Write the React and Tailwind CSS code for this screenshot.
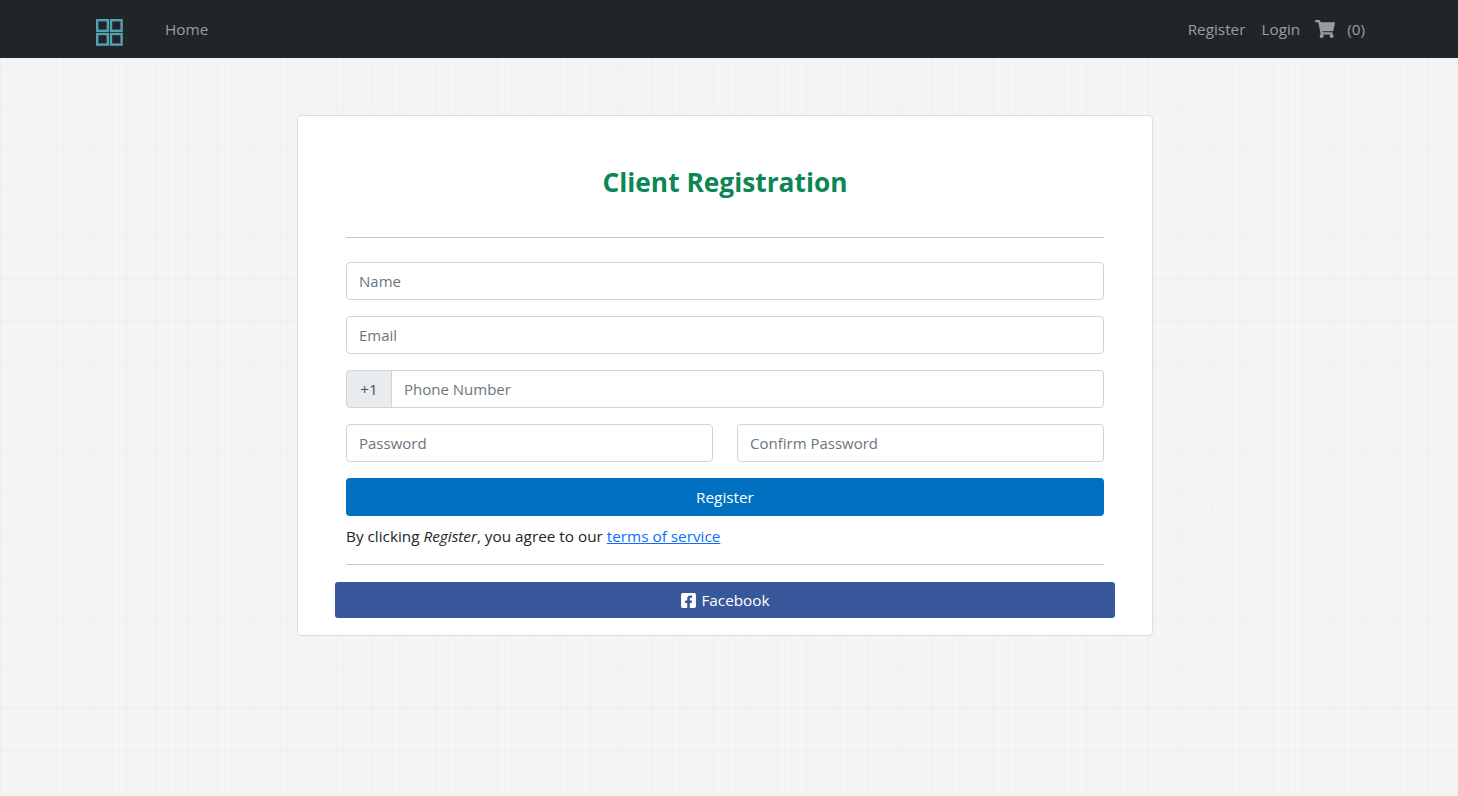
import React from "react";
import { FaShoppingCart, FaFacebookSquare } from "react-icons/fa";

const inputClass =
  "block h-[38px] w-full rounded border border-[#ced4da] bg-white px-3 text-[15px] text-[#495057] outline-none placeholder:text-[#6c757d]";

const Logo = () => (
  <svg width="27" height="27" viewBox="0 0 27 27" fill="none" stroke="#53a0b2" strokeWidth="2.4" className="mt-[6px]">
    <rect x="1.2" y="1.2" width="10.6" height="10.6" />
    <rect x="15" y="1.2" width="10.6" height="10.6" />
    <rect x="1.2" y="15" width="10.6" height="10.6" />
    <rect x="15" y="15" width="10.6" height="10.6" />
  </svg>
);

const App = () => {
  return (
    <div className="flex min-h-[796px] flex-col bg-[#f5f5f5] bg-[repeating-linear-gradient(90deg,rgba(0,0,0,0.01)_0px,rgba(0,0,0,0.01)_1px,transparent_1px,transparent_7px),repeating-linear-gradient(0deg,rgba(0,0,0,0.01)_0px,rgba(0,0,0,0.01)_1px,transparent_1px,transparent_11px),repeating-linear-gradient(90deg,rgba(0,0,0,0.008)_0px,rgba(0,0,0,0.008)_3px,transparent_3px,transparent_31px),repeating-linear-gradient(0deg,rgba(0,0,0,0.008)_0px,rgba(0,0,0,0.008)_3px,transparent_3px,transparent_43px)] font-['Open_Sans','Noto_Sans',sans-serif] text-[15.3px] text-[#212529]">
      {/* Navbar */}
      <nav className="flex h-[58px] items-center justify-between bg-[#212529] pl-[96px] pr-[93px] text-[#9a9da0]">
        <div className="flex items-center">
          <Logo />
          <a href="#" className="ml-[42px]">Home</a>
        </div>
        <div className="flex items-center">
          <a href="#">Register</a>
          <a href="#" className="ml-[16px]">Login</a>
          <FaShoppingCart className="mb-[1px] ml-[15px] text-[20px]" />
          <span className="ml-[12px]">(0)</span>
        </div>
      </nav>

      {/* Card */}
      <main className="flex justify-center pt-[57px]">
        <div className="mr-[8px] w-[856px] rounded border border-[#dcdcdc] bg-white px-[37px] pb-[17px]">
          <div className="px-[11px]">
            <h1 className="flex h-[122px] items-start justify-center border-b border-[#c8c8c8] pt-[46px] font-bold text-[26.3px] leading-[40px] text-[#0a8754]">
              Client Registration
            </h1>

            <form className="mt-[24px] flex flex-col gap-[16px]">
              <input className={inputClass} placeholder="Name" />
              <input className={inputClass} placeholder="Email" />
              <div className="flex">
                <span className="flex h-[38px] w-[46px] shrink-0 items-center justify-center rounded-l border border-[#ced4da] bg-[#e9ecef] text-[#495057]">
                  +1
                </span>
                <input className={`${inputClass} -ml-px rounded-l-none`} placeholder="Phone Number" />
              </div>
              <div className="grid grid-cols-2 gap-[24px]">
                <input className={inputClass} placeholder="Password" />
                <input className={inputClass} placeholder="Confirm Password" />
              </div>
              <button type="button" className="h-[38px] rounded bg-[#0070c0] text-white">
                Register
              </button>
            </form>

            <p className="mt-[9px] h-[40px] border-b border-[#c8c8c8] leading-[22px]">
              By clicking <em>Register</em>, you agree to our{" "}
              <a href="#" className="text-[#0d6efd] underline">terms of service</a>
            </p>
          </div>

          <button type="button" className="mt-[17px] flex h-[36px] w-full items-center justify-center gap-[4px] rounded-[3px] bg-[#38589b] text-white">
            <FaFacebookSquare className="text-[17px]" />
            Facebook
          </button>
        </div>
      </main>
    </div>
  );
};

export default App;
